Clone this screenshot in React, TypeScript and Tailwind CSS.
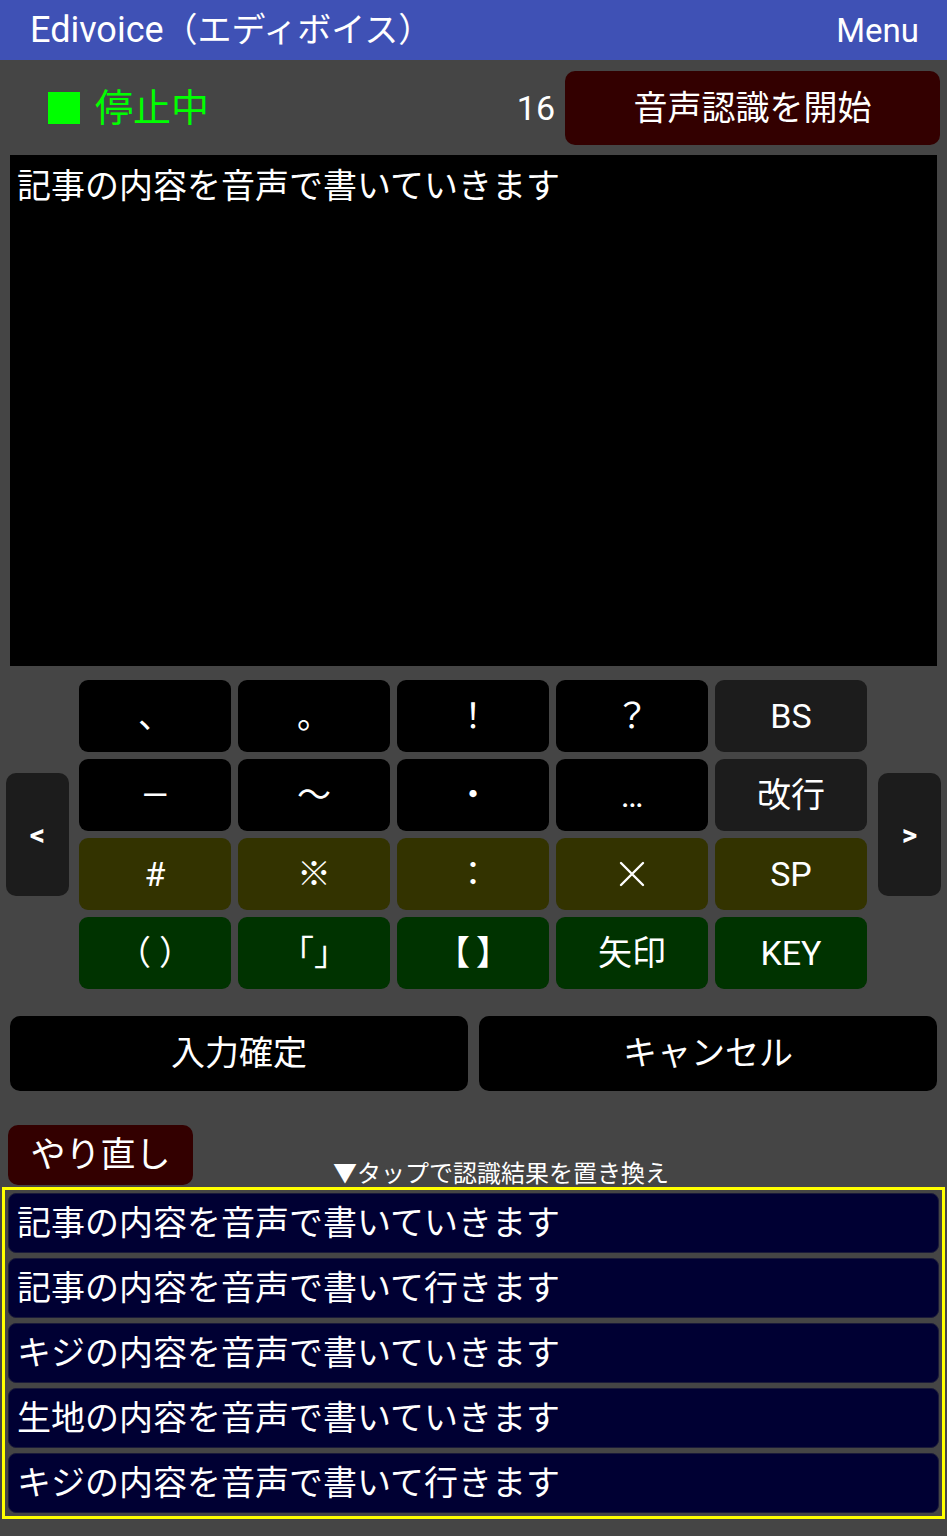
import type { ReactNode } from "react";

const cross = (
  <svg width="26" height="26" viewBox="0 0 26 26" fill="none" stroke="white" strokeWidth="2.4" strokeLinecap="round">
    <path d="M2 2 L24 24 M24 2 L2 24" />
  </svg>
);

const keys: { label: ReactNode; bg: string; cls?: string }[][] = [
  [
    { label: "、", bg: "bg-black" },
    { label: "。", bg: "bg-black" },
    { label: "！", bg: "bg-black" },
    { label: "？", bg: "bg-black" },
    { label: "BS", bg: "bg-[#1c1c1c]" },
  ],
  [
    { label: "―", bg: "bg-black" },
    { label: "〜", bg: "bg-black" },
    { label: "・", bg: "bg-black" },
    { label: "…", bg: "bg-black" },
    { label: "改行", bg: "bg-[#1c1c1c]" },
  ],
  [
    { label: "#", bg: "bg-[#333300]" },
    { label: "※", bg: "bg-[#333300]", cls: "text-[22px] font-bold" },
    { label: "：", bg: "bg-[#333300]" },
    { label: cross, bg: "bg-[#333300]" },
    { label: "SP", bg: "bg-[#333300]" },
  ],
  [
    { label: "（）", bg: "bg-[#003300]", cls: "tracking-[8px] pl-[8px]" },
    { label: "「」", bg: "bg-[#003300]" },
    { label: "【】", bg: "bg-[#003300]", cls: "tracking-[6px] pl-[6px]" },
    { label: "矢印", bg: "bg-[#003300]" },
    { label: "KEY", bg: "bg-[#003300]" },
  ],
];

const candidates = [
  "記事の内容を音声で書いていきます",
  "記事の内容を音声で書いて行きます",
  "キジの内容を音声で書いていきます",
  "生地の内容を音声で書いていきます",
  "キジの内容を音声で書いて行きます",
];

export default function App() {
  return (
    <div className="min-h-[1536px] w-full bg-[#454545] text-white font-['Roboto','Noto_Sans_CJK_JP',sans-serif]">
      {/* Header */}
      <header className="h-[60px] bg-[#3f51b5] flex items-center justify-between pl-[30px] pr-[28px] text-[34px] leading-none">
        <span>
          <span className="text-[36px]">Edivoice</span>（エディボイス）
        </span>
        <span className="text-[33px]">Menu</span>
      </header>

      {/* Status row */}
      <div className="mt-[11px] h-[74px] flex items-center">
        <div className="ml-[48px] w-[32px] h-[32px] bg-[#00ff00]" />
        <span className="ml-[15px] text-[38px] leading-none text-[#00ff00]">停止中</span>
        <div className="flex-1" />
        <span className="mr-[10px] text-[34px] leading-none">16</span>
        <button className="mr-[7px] w-[375px] h-full rounded-[10px] bg-[#330000] text-[34px] leading-none">
          音声認識を開始
        </button>
      </div>

      {/* Text area */}
      <div className="mt-[10px] mx-[10px] h-[511px] bg-black px-[7px] pt-[9px] text-[34px] leading-[1.3]">
        記事の内容を音声で書いていきます
      </div>

      {/* Keyboard */}
      <div className="mt-[14px] flex items-center pl-[6px]">
        <button className="w-[63px] h-[123px] rounded-[10px] bg-[#1c1c1c] text-[30px] font-bold">&lt;</button>
        <div className="ml-[10px] grid grid-cols-[repeat(5,152px)] auto-rows-[72px] gap-[7px]">
          {keys.flat().map((k, i) => (
            <button
              key={i}
              className={`${k.bg} rounded-[9px] flex items-center justify-center text-[34px] leading-none ${k.cls ?? ""}`}
            >
              {k.label}
            </button>
          ))}
        </div>
        <button className="ml-[11px] w-[63px] h-[123px] rounded-[10px] bg-[#1c1c1c] text-[30px] font-bold">&gt;</button>
      </div>

      {/* Confirm / cancel */}
      <div className="mt-[27px] mx-[10px] flex gap-[11px]">
        <button className="flex-1 h-[75px] rounded-[10px] bg-black text-[34px]">入力確定</button>
        <button className="flex-1 h-[75px] rounded-[10px] bg-black text-[34px]">キャンセル</button>
      </div>

      {/* Redo + hint */}
      <div className="mt-[34px] flex items-end">
        <button className="ml-[8px] w-[185px] h-[60px] rounded-[10px] bg-[#330000] text-[35px] leading-none">
          やり直し
        </button>
        <span className="ml-[140px] text-[24px] leading-none mb-[-1px]">▼タップで認識結果を置き換え</span>
      </div>

      {/* Candidates */}
      <div className="mx-[2px] mt-[2px] border-[3px] border-[#ffff00] p-[3px] flex flex-col gap-[5px]">
        {candidates.map((c, i) => (
          <div
            key={i}
            className="h-[60px] rounded-[8px] bg-[#000033] border border-[#1a1a3a] flex items-center pl-[8px] text-[34px] leading-none"
          >
            {c}
          </div>
        ))}
      </div>
    </div>
  );
}
